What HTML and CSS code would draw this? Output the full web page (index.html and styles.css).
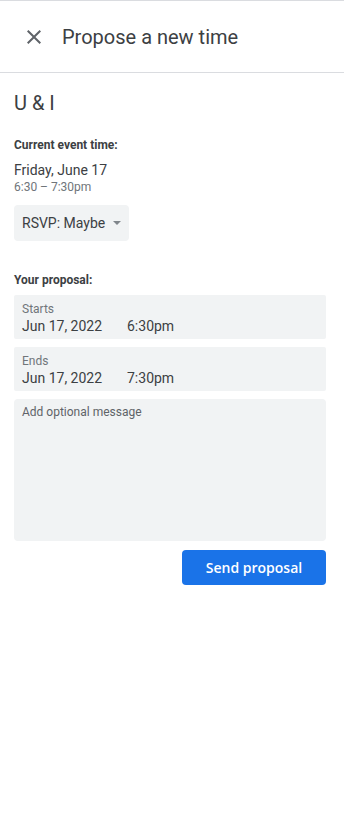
FILE: index.html
```html
<!DOCTYPE html>
<html>
<head>
<meta charset="utf-8">
<link rel="stylesheet" href="styles.css">
</head>
<body>
<div class="page">
  <header class="header">
    <span class="close">
      <svg width="24" height="24" viewBox="0 0 24 24"><path d="M19 6.41L17.59 5 12 10.59 6.41 5 5 6.41 10.59 12 5 17.59 6.41 19 12 13.41 17.59 19 19 17.59 13.41 12z" fill="#5f6368"/></svg>
    </span>
    <h1 class="title">Propose a new time</h1>
  </header>
  <main class="content">
    <div class="event-name">U &amp; I</div>
    <div class="label current-label">Current event time:</div>
    <div class="date">Friday, June 17</div>
    <div class="time">6:30 – 7:30pm</div>
    <div class="rsvp">
      <span>RSVP: Maybe</span>
      <span class="caret"></span>
    </div>
    <div class="label proposal-label">Your proposal:</div>
    <div class="field">
      <div class="field-label">Starts</div>
      <div class="field-value"><span class="dt">Jun 17, 2022</span><span>6:30pm</span></div>
    </div>
    <div class="field">
      <div class="field-label">Ends</div>
      <div class="field-value"><span class="dt">Jun 17, 2022</span><span>7:30pm</span></div>
    </div>
    <div class="message">Add optional message</div>
    <div class="actions">
      <button class="send">Send proposal</button>
    </div>
  </main>
</div>
</body>
</html>
```

FILE: styles.css
```css
* { box-sizing: border-box; }
html, body { margin: 0; padding: 0; background: #fff; }
body {
  font-family: Roboto, "Liberation Sans", sans-serif;
  color: #3c4043;
  border-top: 1px solid #dadce0;
}
.header {
  display: flex;
  align-items: center;
  height: 72px;
  border-bottom: 1px solid #dadce0;
  padding-left: 22px;
}
.close { display: flex; width: 24px; height: 24px; margin-right: 16px; }
.title {
  margin: 0;
  font-size: 20px;
  font-weight: 400;
  color: #3c4043;
}
.content { padding: 0 18px 0 14px; }
.event-name {
  font-size: 20px;
  line-height: 28px;
  margin-top: 16px;
  color: #3c4043;
}
.label {
  font-size: 12px;
  font-weight: 700;
  line-height: 16px;
  color: #3c4043;
}
.current-label { margin-top: 20px; }
.date { font-size: 14px; line-height: 18px; margin-top: 8px; }
.time { font-size: 12px; line-height: 16px; color: #70757a; }
.rsvp {
  display: inline-flex;
  align-items: center;
  height: 36px;
  margin-top: 10px;
  padding: 0 8px;
  background: #f1f3f4;
  border-radius: 4px;
  font-size: 14px;
  color: #3c4043;
}
.caret {
  width: 0; height: 0;
  margin-left: 8px;
  border-left: 4px solid transparent;
  border-right: 4px solid transparent;
  border-top: 4px solid #80868b;
}
.proposal-label { margin-top: 31px; }
.field {
  background: #f1f3f4;
  border-radius: 2px;
  height: 44px;
  padding: 7px 8px 0;
  margin-top: 8px;
}
.proposal-label + .field { margin-top: 7px; }
.field-label { font-size: 12px; line-height: 14px; color: #70757a; }
.field-value { font-size: 14px; line-height: 20px; color: #3c4043; display: flex; }
.dt { width: 105px; }
.message {
  background: #f1f3f4;
  border-radius: 4px;
  height: 142px;
  margin-top: 8px;
  padding: 6px 8px;
  font-size: 12px;
  line-height: 14px;
  color: #5f6368;
}
.actions { display: flex; justify-content: flex-end; margin-top: 9px; }
.send {
  width: 144px;
  height: 35px;
  border: none;
  border-radius: 4px;
  background: #1a73e8;
  color: #fff;
  font-family: "Open Sans", Roboto, sans-serif;
  font-weight: 600;
  font-size: 14px;
}
```
